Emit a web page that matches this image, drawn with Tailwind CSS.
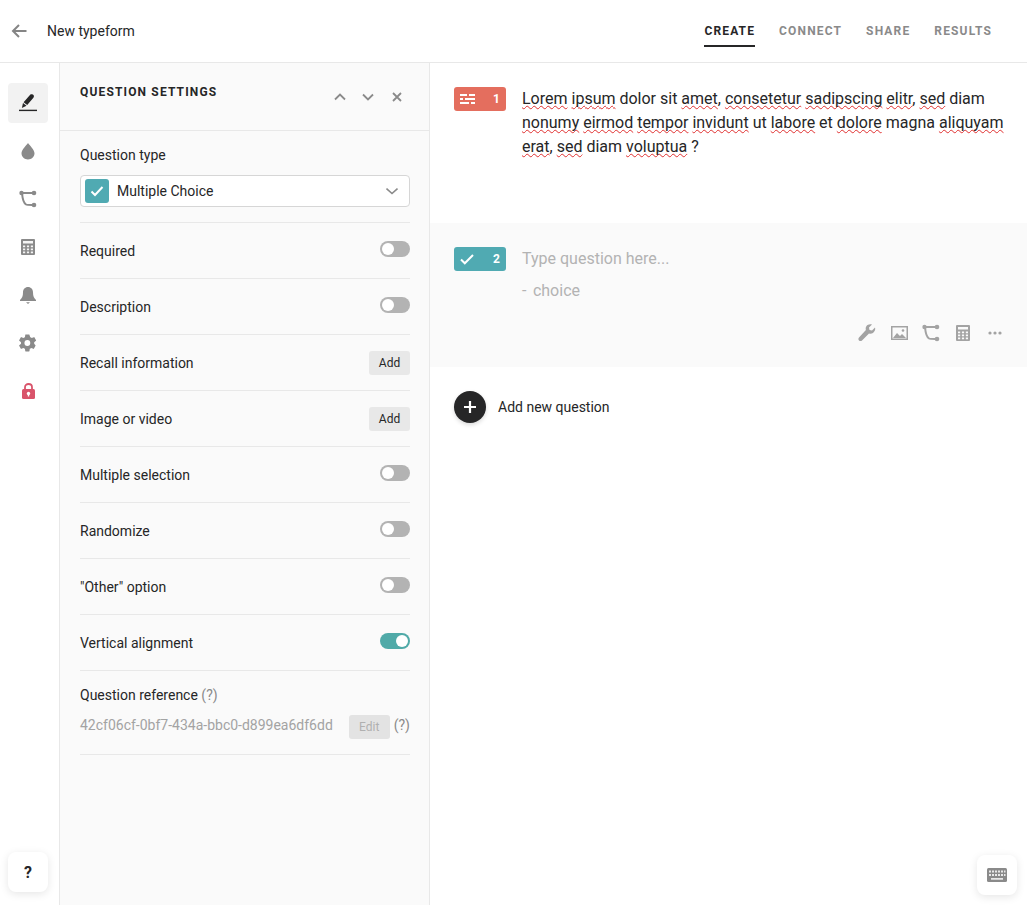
<!DOCTYPE html>
<html><head><meta charset="utf-8"><title>New typeform</title>
<script src="https://cdn.jsdelivr.net/npm/@tailwindcss/browser@4"></script></head>
<body class="bg-white font-['Roboto',sans-serif] text-[#262627] overflow-hidden">
<div class="relative w-[1027px] h-[905px] flex flex-col overflow-hidden">
  <header class="h-[63px] shrink-0 border-b border-[#e8e8e8] flex items-start">
    <div class="flex items-center h-[62px] pl-[11px]">
      <svg width="16" height="16" viewBox="0 0 16 16" fill="none" stroke="#858585" stroke-width="2"><path d="M15.500 8H2M8 2L2 8l6 6"/></svg>
      <span class="ml-[20px] text-sm leading-[20px]">New typeform</span>
    </div>
    <nav class="ml-auto mr-[35px] flex gap-[24px] text-xs font-bold tracking-[1.15px] text-[#8a8a8a]">
      <div class="h-[47px] pt-[24px] leading-[14px] text-[#262627] border-b-2 border-[#262627]">CREATE</div>
      <div class="pt-[24px] leading-[14px]">CONNECT</div>
      <div class="pt-[24px] leading-[14px]">SHARE</div>
      <div class="pt-[24px] leading-[14px]">RESULTS</div>
    </nav>
  </header>
  <div class="flex flex-1 min-h-0">
    <aside class="w-[60px] shrink-0 border-r border-[#e8e8e8] flex flex-col items-center pt-[20px] pr-[3px]">
      <div class="w-[40px] h-[40px] rounded-[4px] bg-[#f2f2f2] flex items-center justify-center">
        <svg width="20" height="20" viewBox="0 0 20 20" fill="#262627"><path d="M12.400 1.600c1-.9 2.600-.3 3.100.4.600.8.600 1.800-.1 2.700L9.200 12 5.600 9.200z"/><path d="M5 10l3.500 2.700-4.600 2.300z"/><rect x="1" y="16.700" width="18" height="1.400"/></svg>
      </div>
      <div class="w-[40px] h-[40px] mt-[8px] flex items-center justify-center">
        <svg width="14" height="17" viewBox="0 0 14 17" fill="#8a8a8a"><path d="M7 0c1.500 2.400 6.500 6.700 6.500 10.300C13.500 14 10.500 16.500 7 16.500S.5 14 .5 10.300C.5 6.700 5.500 2.400 7 0z"/></svg>
      </div>
      <div class="w-[40px] h-[40px] mt-[8px] flex items-center justify-center">
        <svg width="18" height="18" viewBox="0 0 18 18" fill="none" stroke="#8a8a8a" stroke-width="2"><path d="M3 3h12M3 3c.5 6 1.500 10 4 11.500 1 .6 4 .5 8 .5"/><circle cx="2.500" cy="3" r="2.200" fill="#8a8a8a" stroke="none"/><circle cx="15" cy="3" r="2.300" fill="#8a8a8a" stroke="none"/><circle cx="15" cy="15" r="2.300" fill="#8a8a8a" stroke="none"/></svg>
      </div>
      <div class="w-[40px] h-[40px] mt-[8px] flex items-center justify-center">
        <svg width="14" height="16" viewBox="0 0 14 16"><rect width="14" height="16" rx="1" fill="#8a8a8a"/><path d="M2 2h10v2.500H2zM2 6.500h2.200v1.700H2zM5.900 6.500h2.200v1.700H5.900zM9.800 6.500H12v1.700H9.800zM2 9.500h2.200v1.700H2zM5.900 9.500h2.200v1.700H5.900zM9.800 9.500H12v1.700H9.800zM2 12.500h2.200v1.700H2zM5.900 12.500h2.200v1.700H5.900zM9.800 12.500H12v1.700H9.800z" fill="#f4f4f4"/></svg>
      </div>
      <div class="w-[40px] h-[40px] mt-[8px] flex items-center justify-center pt-[1px]">
        <svg width="16" height="18" viewBox="0 0 16 18" fill="#8a8a8a"><path d="M8 0c3 0 5 2.300 5 5.500 0 4 1 5.500 3 7.500v1H0v-1c2-2 3-3.500 3-7.500C3 2.300 5 0 8 0z"/><path d="M6 15.200h4L8 17z"/></svg>
      </div>
      <div class="w-[40px] h-[40px] mt-[8px] flex items-center justify-center">
        <svg width="20" height="20" viewBox="0 0 24 24" fill="#8a8a8a"><path d="M19.400 13c.04-.33.06-.66.06-1s-.02-.67-.07-1l2.150-1.650c.2-.15.25-.42.120-.64l-2.040-3.520c-.12-.22-.39-.3-.61-.22l-2.540 1.020c-.53-.4-1.100-.74-1.720-.99L13.760 2.300c-.03-.24-.24-.42-.49-.42h-4.080c-.25 0-.46.180-.49.420l-.39 2.700c-.62.25-1.190.59-1.720.99L4.050 4.970c-.22-.08-.49 0-.61.22L1.400 8.710c-.13.220-.07.490.12.640L3.670 11c-.05.33-.08.67-.08 1s.03.67.08 1l-2.150 1.650c-.19.150-.25.420-.12.640l2.040 3.520c.12.220.39.300.61.220l2.540-1.020c.53.400 1.100.740 1.720.990l.39 2.700c.03.240.24.420.49.420h4.080c.25 0 .46-.180.49-.420l.39-2.700c.62-.250 1.190-.590 1.720-.990l2.540 1.020c.22.080.49 0 .61-.220l2.040-3.520c.13-.220.07-.490-.12-.640zM11.230 15.500a3.500 3.500 0 1 1 0-7 3.500 3.500 0 0 1 0 7z"/></svg>
      </div>
      <div class="w-[40px] h-[40px] mt-[8px] flex items-center justify-center">
        <svg width="13" height="16" viewBox="0 0 13 16"><path d="M3 7V4.200C3 2.200 4.500 1 6.500 1S10 2.200 10 4.200V7" fill="none" stroke="#d9546b" stroke-width="1.800"/><rect y="6" width="13" height="10" rx="1.500" fill="#d9546b"/><circle cx="6.500" cy="10.500" r="1.700" fill="#fff"/><rect x="5.800" y="11" width="1.400" height="2.500" fill="#fff"/></svg>
      </div>
      <button class="mt-auto mb-[13px] w-[40px] h-[40px] pt-[1px] rounded-[8px] bg-white shadow-[0_2px_8px_rgba(0,0,0,0.1)] text-base font-bold leading-none text-[#262627]">?</button>
    </aside>

    <section class="w-[370px] shrink-0 bg-[#fafafa] border-r border-[#e8e8e8] text-sm">
      <div class="h-[68px] border-b border-[#e8e8e8] pl-[20px] pr-[26px] flex items-start justify-between">
        <h2 class="pt-[22px] text-xs leading-[14px] font-bold tracking-[1.15px]">QUESTION SETTINGS</h2>
        <div class="flex items-center gap-[16px] pt-[28px]">
          <svg width="12" height="12" viewBox="0 0 12 12" fill="none" stroke="#8a8a8a" stroke-width="1.800"><path d="M1 8.500l5-5 5 5"/></svg>
          <svg width="12" height="12" viewBox="0 0 12 12" fill="none" stroke="#8a8a8a" stroke-width="1.800"><path d="M1 3.500l5 5 5-5"/></svg>
          <svg class="ml-[1px]" width="12" height="12" viewBox="0 0 12 12" fill="none" stroke="#8a8a8a" stroke-width="1.800"><path d="M2 2l8 8M10 2l-8 8"/></svg>
        </div>
      </div>
      <div class="pl-[20px] pr-[19px]">
        <div class="h-[92px] border-b border-[#e8e8e8] pt-[14px]">
          <div class="leading-[20px]">Question type</div>
          <div class="mt-[10px] h-[32px] w-[330px] rounded-[4px] border border-[#d6d6d6] bg-white flex items-center pl-[4px] pr-[11px]">
            <span class="w-[24px] h-[24px] rounded-[3px] bg-[#50aab2] flex items-center justify-center">
              <svg width="14" height="12" viewBox="0 0 14 12" fill="none" stroke="#fff" stroke-width="2"><path d="M1.500 6.500l3.500 3.500 7.500-8"/></svg>
            </span>
            <span class="ml-[8px] leading-[20px]">Multiple Choice</span>
            <svg class="ml-auto" width="12" height="12" viewBox="0 0 12 12" fill="none" stroke="#8a8a8a" stroke-width="1.600"><path d="M.5 3.500L6 8.500l5.500-5"/></svg>
          </div>
        </div>
        <div class="h-[56px] border-b border-[#e8e8e8] flex items-center justify-between"><span>Required</span><span class="w-[30px] h-[16px] mb-[3px] rounded-full bg-[#b3b3b3] p-[2px] flex"><span class="w-[12px] h-[12px] rounded-full bg-white"></span></span></div>
        <div class="h-[56px] border-b border-[#e8e8e8] flex items-center justify-between"><span>Description</span><span class="w-[30px] h-[16px] mb-[3px] rounded-full bg-[#b3b3b3] p-[2px] flex"><span class="w-[12px] h-[12px] rounded-full bg-white"></span></span></div>
        <div class="h-[56px] border-b border-[#e8e8e8] flex items-center justify-between"><span>Recall information</span><span class="w-[41px] h-[24px] rounded-[3px] bg-[#e8e8e8] text-xs flex items-center justify-center">Add</span></div>
        <div class="h-[56px] border-b border-[#e8e8e8] flex items-center justify-between"><span>Image or video</span><span class="w-[41px] h-[24px] rounded-[3px] bg-[#e8e8e8] text-xs flex items-center justify-center">Add</span></div>
        <div class="h-[56px] border-b border-[#e8e8e8] flex items-center justify-between"><span>Multiple selection</span><span class="w-[30px] h-[16px] mb-[3px] rounded-full bg-[#b3b3b3] p-[2px] flex"><span class="w-[12px] h-[12px] rounded-full bg-white"></span></span></div>
        <div class="h-[56px] border-b border-[#e8e8e8] flex items-center justify-between"><span>Randomize</span><span class="w-[30px] h-[16px] mb-[3px] rounded-full bg-[#b3b3b3] p-[2px] flex"><span class="w-[12px] h-[12px] rounded-full bg-white"></span></span></div>
        <div class="h-[56px] border-b border-[#e8e8e8] flex items-center justify-between"><span>"Other" option</span><span class="w-[30px] h-[16px] mb-[3px] rounded-full bg-[#b3b3b3] p-[2px] flex"><span class="w-[12px] h-[12px] rounded-full bg-white"></span></span></div>
        <div class="h-[56px] border-b border-[#e8e8e8] flex items-center justify-between"><span>Vertical alignment</span><span class="w-[30px] h-[16px] mb-[3px] rounded-full bg-[#50aaa8] p-[2px] flex justify-end"><span class="w-[12px] h-[12px] rounded-full bg-white"></span></span></div>
        <div class="h-[84px] border-b border-[#e8e8e8] pt-[14px]">
          <div class="leading-[20px]">Question reference <span class="text-[#8a8a8a]">(?)</span></div>
          <div class="mt-[10px] flex items-start justify-between">
            <span class="leading-[20px] text-[#a3a3a3]">42cf06cf-0bf7-434a-bbc0-d899ea6df6dd</span>
            <span class="flex items-start">
              <span class="w-[41px] h-[24px] rounded-[3px] bg-[#e3e3e3] text-[#b0b0b0] text-xs flex items-center justify-center">Edit</span>
              <span class="ml-[4px] leading-[20px] text-[#8a8a8a]">(?)</span>
            </span>
          </div>
        </div>
      </div>
    </section>

    <main class="flex-1 min-w-0">
      <div class="h-[160px] flex items-start pl-[24px] pr-[20px] pt-[24px]">
        <span class="w-[52px] h-[24px] shrink-0 rounded-[3px] bg-[#e46e5e] text-white flex items-center justify-between pl-[6px] pr-[6px]">
          <svg width="15" height="10" viewBox="0 0 15 10" fill="#fff"><path d="M0 0h7v2H0zM9 0h6v2H9zM0 4h3v2H0zM5 4h10v2H5zM0 8h9v2H0zM11 8h4v2h-4z"/></svg>
          <span class="text-xs font-bold">1</span>
        </span>
        <p class="ml-[16px] text-base leading-[24px]"><span class="underline decoration-wavy decoration-[#e03030] decoration-1 [text-decoration-skip-ink:none]">Lorem</span> <span class="underline decoration-wavy decoration-[#e03030] decoration-1 [text-decoration-skip-ink:none]">ipsum</span> dolor sit <span class="underline decoration-wavy decoration-[#e03030] decoration-1 [text-decoration-skip-ink:none]">amet</span>, <span class="underline decoration-wavy decoration-[#e03030] decoration-1 [text-decoration-skip-ink:none]">consetetur</span> <span class="underline decoration-wavy decoration-[#e03030] decoration-1 [text-decoration-skip-ink:none]">sadipscing</span> <span class="underline decoration-wavy decoration-[#e03030] decoration-1 [text-decoration-skip-ink:none]">elitr</span>, <span class="underline decoration-wavy decoration-[#e03030] decoration-1 [text-decoration-skip-ink:none]">sed</span> diam <span class="underline decoration-wavy decoration-[#e03030] decoration-1 [text-decoration-skip-ink:none]">nonumy</span> <span class="underline decoration-wavy decoration-[#e03030] decoration-1 [text-decoration-skip-ink:none]">eirmod</span> <span class="underline decoration-wavy decoration-[#e03030] decoration-1 [text-decoration-skip-ink:none]">tempor</span> <span class="underline decoration-wavy decoration-[#e03030] decoration-1 [text-decoration-skip-ink:none]">invidunt</span> ut <span class="underline decoration-wavy decoration-[#e03030] decoration-1 [text-decoration-skip-ink:none]">labore</span> et <span class="underline decoration-wavy decoration-[#e03030] decoration-1 [text-decoration-skip-ink:none]">dolore</span> magna <span class="underline decoration-wavy decoration-[#e03030] decoration-1 [text-decoration-skip-ink:none]">aliquyam</span> <span class="underline decoration-wavy decoration-[#e03030] decoration-1 [text-decoration-skip-ink:none]">erat</span>, <span class="underline decoration-wavy decoration-[#e03030] decoration-1 [text-decoration-skip-ink:none]">sed</span> diam <span class="underline decoration-wavy decoration-[#e03030] decoration-1 [text-decoration-skip-ink:none]">voluptua</span> ?</p>
      </div>
      <div class="h-[144px] bg-[#fafafa] pl-[24px] pr-[16px] pt-[24px]">
        <div class="flex items-start">
          <span class="w-[52px] h-[24px] shrink-0 rounded-[3px] bg-[#50aab2] text-white flex items-center justify-between pl-[6px] pr-[6px]">
            <svg width="14" height="11" viewBox="0 0 14 11" fill="none" stroke="#fff" stroke-width="2"><path d="M1 5.500l3.800 3.800L13 1"/></svg>
            <span class="text-xs font-bold">2</span>
          </span>
          <div class="ml-[16px] text-base leading-[24px] text-[#b3b3b3]">
            <div>Type question here...</div>
            <div class="mt-[8px] flex"><span>-</span><span class="ml-[6.500px]">choice</span></div>
          </div>
        </div>
        <div class="flex items-center mt-[18px] justify-end">
          <span class="w-[32px] h-[24px] flex items-center justify-center"><svg width="18" height="18" viewBox="0 0 18 18" fill="#a3a3a3"><path d="M17 3.500l-3 3-2.500-.5-.5-2.500 3-3c-2.200-.8-4.500 0-5.500 1.500-.9 1.400-1 2.700-.6 4L1 13.400c-.8.800-.8 2.200 0 3 .8.800 2.200.8 3 0L11 9.500c1.300.4 2.800.2 4-.6 1.600-1.100 2.700-3.200 2-5.400z"/></svg></span>
          <span class="w-[32px] h-[24px] flex items-center justify-center"><svg width="17" height="16" viewBox="0 0 17 16"><rect x=".75" y="1.750" width="15.500" height="12.500" fill="none" stroke="#a3a3a3" stroke-width="1.500"/><path d="M2 13l4-5 3 3 2-2 4 4z" fill="#a3a3a3"/><circle cx="12" cy="5.500" r="1.300" fill="#a3a3a3"/></svg></span>
          <span class="w-[32px] h-[24px] flex items-center justify-center"><svg width="18" height="18" viewBox="0 0 18 18" fill="none" stroke="#a3a3a3" stroke-width="2"><path d="M3 3h12M3 3c.5 6 1.500 10 4 11.500 1 .6 4 .5 8 .5"/><circle cx="2.500" cy="3" r="2.200" fill="#a3a3a3" stroke="none"/><circle cx="15" cy="3" r="2.300" fill="#a3a3a3" stroke="none"/><circle cx="15" cy="15" r="2.300" fill="#a3a3a3" stroke="none"/></svg></span>
          <span class="w-[32px] h-[24px] flex items-center justify-center"><svg width="14" height="16" viewBox="0 0 14 16"><rect width="14" height="16" rx="1" fill="#a3a3a3"/><path d="M2 2h10v2.500H2zM2 6.500h2.200v1.700H2zM5.900 6.500h2.200v1.700H5.900zM9.800 6.500H12v1.700H9.800zM2 9.500h2.200v1.700H2zM5.900 9.500h2.200v1.700H5.900zM9.800 9.500H12v1.700H9.800zM2 12.500h2.200v1.700H2zM5.900 12.500h2.200v1.700H5.900zM9.800 12.500H12v1.700H9.800z" fill="#fafafa"/></svg></span>
          <span class="w-[32px] h-[24px] flex items-center justify-center"><svg width="14" height="4" viewBox="0 0 14 4" fill="#a3a3a3"><circle cx="2" cy="2" r="1.600"/><circle cx="7" cy="2" r="1.600"/><circle cx="12" cy="2" r="1.600"/></svg></span>
        </div>
      </div>
      <div class="flex items-center pl-[24px] mt-[24px]">
        <span class="w-[32px] h-[32px] rounded-full bg-[#262627] shadow-[0_2px_4px_rgba(0,0,0,0.15)] flex items-center justify-center">
          <svg width="12" height="12" viewBox="0 0 12 12" stroke="#fff" stroke-width="2.200"><path d="M6 0v12M0 6h12"/></svg>
        </span>
        <span class="ml-[12px] text-sm">Add new question</span>
      </div>
    </main>
  </div>
  <button class="absolute right-[10px] bottom-[10px] w-[40px] h-[40px] rounded-[8px] bg-white shadow-[0_2px_8px_rgba(0,0,0,0.1)] flex items-center justify-center">
    <svg width="20" height="14" viewBox="0 0 20 14"><rect width="20" height="14" rx="1.500" fill="#8a8a8a"/><path d="M2 2.500h2v2H2zM5 2.500h2v2H5zM8 2.500h2v2H8zM11 2.500h2v2h-2zM14 2.500h2v2h-2zM17 2.500h1.500v2H17zM2 6h2v2H2zM5 6h2v2H5zM8 6h2v2H8zM11 6h2v2h-2zM14 6h2v2h-2zM17 6h1.500v2H17zM4 10h12v1.800H4z" fill="#e8e8e8"/></svg>
  </button>
</div>
</body></html>
